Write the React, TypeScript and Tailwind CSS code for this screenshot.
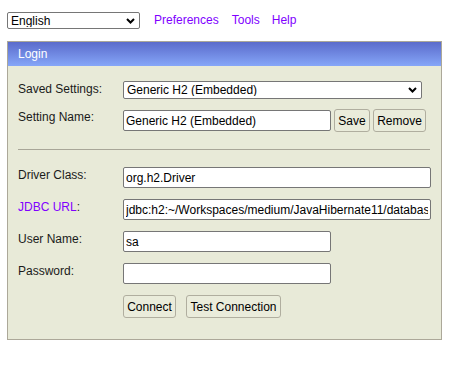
import React from 'react'

function Chevron() {
  return (
    <svg
      className="pointer-events-none absolute right-[5px] top-1/2 -translate-y-1/2"
      width="9"
      height="6"
      viewBox="0 0 9 6"
    >
      <path d="M1 1 L4.5 4.5 L8 1" fill="none" stroke="#000" strokeWidth="2" />
    </svg>
  )
}

function Select({ value, className }: { value: string; className: string }) {
  return (
    <div className={`relative ${className}`}>
      <select
        defaultValue={value}
        className="h-full w-full appearance-none rounded-[2px] border border-[#767676] bg-white pl-[3px] text-[12px] leading-none text-black outline-none"
      >
        <option>{value}</option>
      </select>
      <Chevron />
    </div>
  )
}

function Field({ value, width }: { value: string; width: string }) {
  return (
    <input
      readOnly
      defaultValue={value}
      className={`h-[21px] ${width} rounded-[2px] border border-[#767676] bg-white px-[2px] text-[12px] text-black outline-none`}
    />
  )
}

function Btn({ label, width }: { label: string; width: string }) {
  return (
    <button
      className={`h-[23px] ${width} rounded-[3px] border border-[#b0ae9f] bg-[#eaecdb] text-center text-[12px] text-black`}
    >
      {label}
    </button>
  )
}

function Row({ label, children, className = '' }: { label: React.ReactNode; children: React.ReactNode; className?: string }) {
  return (
    <div className={`flex items-start ${className}`}>
      <div className="w-[105px] shrink-0 pt-[1px] leading-[14px] text-[#1a1a1a]">{label}</div>
      {children}
    </div>
  )
}

export default function App() {
  return (
    <div className="min-h-[370px] bg-white pt-[12px] font-['Liberation_Sans',Arial,sans-serif] text-[12px]">
      {/* Top bar */}
      <div className="ml-[7px] flex h-[17px] items-center leading-[17px]">
        <Select value="English" className="h-[17px] w-[133px]" />
        <a className="ml-[14px] text-[#8000ff]">Preferences</a>
        <a className="ml-[13px] text-[#8000ff]">Tools</a>
        <a className="ml-[12px] text-[#8000ff]">Help</a>
      </div>

      {/* Login panel */}
      <div className="ml-[7px] mt-[12px] w-[435px] border border-[#aca899] bg-[#e8ead8]">
        <div className="flex h-[24px] items-center bg-gradient-to-b from-[#5b6bcb] to-[#86a6f8] pl-[10px] text-white">
          Login
        </div>
        <div className="px-[10px] pb-[21px] pt-[15px]">
          <Row label="Saved Settings:">
            <Select value="Generic H2 (Embedded)" className="h-[18px] w-[299px]" />
          </Row>
          <Row label="Setting Name:" className="mt-[10px]">
            <div className="flex items-start">
              <div className="mt-[1px]">
                <Field value="Generic H2 (Embedded)" width="w-[208px]" />
              </div>
              <div className="ml-[3px]">
                <Btn label="Save" width="w-[36px]" />
              </div>
              <div className="ml-[3px]">
                <Btn label="Remove" width="w-[53px]" />
              </div>
            </div>
          </Row>

          <div className="mt-[17px] h-px w-[412px] bg-[#a8a698]" />

          <Row label="Driver Class:" className="mt-[17px]">
            <Field value="org.h2.Driver" width="w-[308px]" />
          </Row>
          <Row
            label={
              <>
                <span className="text-[#8000ff]">JDBC URL</span>:
              </>
            }
            className="mt-[11px]"
          >
            <Field value="jdbc:h2:~/Workspaces/medium/JavaHibernate11/database/test" width="w-[308px]" />
          </Row>
          <Row label="User Name:" className="mt-[11px]">
            <Field value="sa" width="w-[208px]" />
          </Row>
          <Row label="Password:" className="mt-[11px]">
            <Field value="" width="w-[208px]" />
          </Row>
          <div className="mt-[11px] flex pl-[105px]">
            <Btn label="Connect" width="w-[53px]" />
            <div className="ml-[10px]">
              <Btn label="Test Connection" width="w-[95px]" />
            </div>
          </div>
        </div>
      </div>
    </div>
  )
}
